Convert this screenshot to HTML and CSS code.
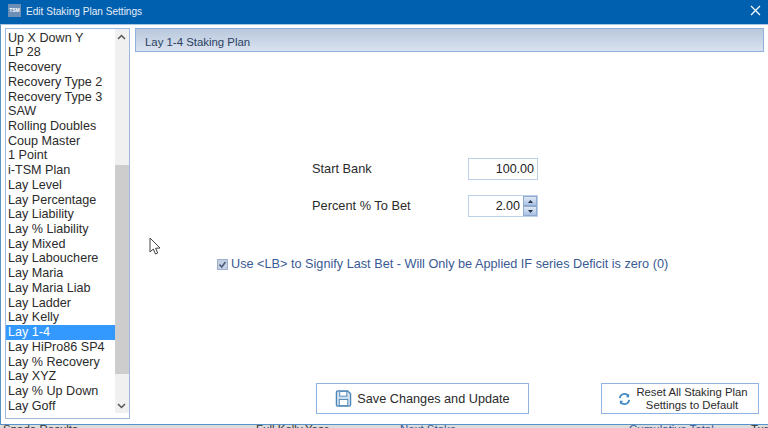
FILE: index.html
```html
<!DOCTYPE html>
<html lang="en">
<head>
    <meta charset="UTF-8">
    <title>Edit Staking Plan Settings</title>
    <link rel="stylesheet" href="styles.css">
</head>
<body>
    <div class="window">
        <!-- Title bar -->
        <div class="titlebar">
            <span class="app-icon">TSM</span>
            <span class="title">Edit Staking Plan Settings</span>
            <svg class="close" width="11" height="11" viewBox="0 0 11 11">
                <path d="M1 1 L10 10 M10 1 L1 10" stroke="#fff" stroke-width="1.2" fill="none"/>
            </svg>
        </div>

        <div class="content">
            <!-- Plan list -->
            <div class="plan-list">
                <ul class="plans">
                    <li>Up X Down Y</li>
                    <li>LP 28</li>
                    <li>Recovery</li>
                    <li>Recovery Type 2</li>
                    <li>Recovery Type 3</li>
                    <li>SAW</li>
                    <li>Rolling Doubles</li>
                    <li>Coup Master</li>
                    <li>1 Point</li>
                    <li>i-TSM Plan</li>
                    <li>Lay Level</li>
                    <li>Lay Percentage</li>
                    <li>Lay Liability</li>
                    <li>Lay % Liability</li>
                    <li>Lay Mixed</li>
                    <li>Lay Labouchere</li>
                    <li>Lay Maria</li>
                    <li>Lay Maria Liab</li>
                    <li>Lay Ladder</li>
                    <li>Lay Kelly</li>
                    <li class="selected">Lay 1-4</li>
                    <li>Lay HiPro86 SP4</li>
                    <li>Lay % Recovery</li>
                    <li>Lay XYZ</li>
                    <li>Lay % Up Down</li>
                    <li>Lay Goff</li>
                </ul>
                <div class="scrollbar">
                    <svg class="arrow" width="9" height="6" viewBox="0 0 9 6">
                        <path d="M1 5 L4.5 1.5 L8 5" stroke="#555" stroke-width="1.5" fill="none"/>
                    </svg>
                    <div class="track"><div class="thumb"></div></div>
                    <svg class="arrow" width="9" height="6" viewBox="0 0 9 6">
                        <path d="M1 1 L4.5 4.5 L8 1" stroke="#555" stroke-width="1.5" fill="none"/>
                    </svg>
                </div>
            </div>

            <!-- Settings panel -->
            <div class="panel">
                <div class="panel-header">Lay 1-4 Staking Plan</div>

                <div class="fields">
                    <div class="field">
                        <label>Start Bank</label>
                        <div class="input">100.00</div>
                    </div>
                    <div class="field">
                        <label>Percent % To Bet</label>
                        <div class="input spin">
                            <span class="spin-value">2.00</span>
                            <span class="spin-btns">
                                <span class="spin-btn"><svg width="5" height="3" viewBox="0 0 5 3"><path d="M2.5 0 L5 3 L0 3 Z" fill="#234"/></svg></span>
                                <span class="spin-btn"><svg width="5" height="3" viewBox="0 0 5 3"><path d="M0 0 L5 0 L2.5 3 Z" fill="#234"/></svg></span>
                            </span>
                        </div>
                    </div>
                </div>

                <div class="check-row">
                    <svg class="check" width="11" height="11" viewBox="0 0 11 11">
                        <rect x="0.5" y="0.5" width="10" height="10" fill="#c3cfe2" stroke="#9fb0cc"/>
                        <path d="M2.5 5.5 L4.7 8 L8.5 3" stroke="#4a5a78" stroke-width="1.5" fill="none"/>
                    </svg>
                    <span>Use &lt;LB&gt; to Signify Last Bet - Will Only be Applied IF series Deficit is zero (0)</span>
                </div>

                <div class="actions">
                    <button class="btn btn-save">
                        <svg width="17" height="17" viewBox="0 0 18 18">
                            <path d="M1.5 2.5 Q1.5 1 3 1 L13.5 1 L16.5 4 L16.5 15.5 Q16.5 17 15 17 L3 17 Q1.5 17 1.5 15.5 Z" fill="#cfe0f0" stroke="#4f86b8" stroke-width="1.4"/>
                            <rect x="5" y="1.5" width="7.5" height="5" fill="#fff" stroke="#4f86b8"/>
                            <rect x="4.5" y="10" width="9" height="6.5" fill="#fff" stroke="#4f86b8"/>
                        </svg>
                        <span>Save Changes and Update</span>
                    </button>
                    <button class="btn btn-reset">
                        <svg width="13" height="14" viewBox="0 0 14 14" fill="none">
                            <path d="M2 6 A5 5 0 0 1 11 3.5" stroke="#3f86c4" stroke-width="1.8"/>
                            <path d="M12 1 L12 5 L8.5 5 Z" fill="#3f86c4"/>
                            <path d="M12 8 A5 5 0 0 1 3 10.5" stroke="#3f86c4" stroke-width="1.8"/>
                            <path d="M2 13 L2 9 L5.5 9 Z" fill="#3f86c4"/>
                        </svg>
                        <span>Reset All Staking Plan<br>Settings to Default</span>
                    </button>
                </div>

                <svg class="cursor" width="13" height="19" viewBox="0 0 13 19">
                    <path d="M1 1 L1 15 L4.3 12 L6.5 17 L8.7 16 L6.6 11.3 L11 11 Z" fill="#fff" stroke="#444" stroke-width="1"/>
                </svg>
            </div>
        </div>

        <!-- Bit of the window behind the dialog -->
        <div class="behind">
            <span class="b1">Spade Results</span>
            <span class="b2">Full Kelly</span>
            <span class="b3">Year</span>
            <span class="b4">Next Stake</span>
            <span class="b5">Cumulative Total</span>
            <span>Tur</span>
        </div>
    </div>
</body>
</html>
```

FILE: styles.css
```css
/* Global Styles */
html, body {
    margin: 0;
    padding: 0;
    height: 100%;
    overflow: hidden;
}

body {
    font-family: "Liberation Sans", Arial, sans-serif;
    font-size: 12px;
    color: #222;
    background: #fff;
}

.window {
    width: 768px;
    height: 428px;
    display: flex;
    flex-direction: column;
    background: #fff;
}

/* Title bar */
.titlebar {
    height: 24px;
    box-sizing: border-box;
    flex: none;
    background: #0060b0;
    color: #e4edf6;
    display: flex;
    align-items: center;
    padding: 0 7px 3px 8px;
    font-size: 10.1px;
}

.app-icon {
    width: 13px;
    height: 13px;
    margin-right: 5px;
    background: #6d8fb5;
    color: #fff;
    font-size: 5px;
    font-weight: bold;
    line-height: 13px;
    text-align: center;
}

.title {
    flex: 1;
    margin-top: 2px;
}

/* Content */
.content {
    flex: 1;
    display: flex;
    gap: 5px;
    padding: 3px 4px 0 4px;
    border-left: 1px solid #5a93c8;
    border-top: 1px solid #a9c6e4;
    min-height: 0;
}

.plan-list {
    width: 125px;
    height: 391px;
    flex: none;
    display: flex;
    border: 1px solid #9db9e0;
    box-sizing: border-box;
}

.plans {
    flex: 1;
    list-style: none;
    margin: 0;
    padding: 1.7px 0 0;
    font-size: 12.6px;
    color: #2b2b2b;
}

.plans li {
    height: 14.73px;
    line-height: 14.73px;
    padding-left: 2px;
    white-space: nowrap;
}

.plans li.selected {
    background: #3399ff;
    color: #fff;
}

.scrollbar {
    width: 14px;
    margin-bottom: 5px;
    display: flex;
    flex-direction: column;
    background: #f0f0f0;
}

.arrow {
    flex: none;
    margin: 5px 2px 4px;
}

.track {
    flex: 1;
    padding-top: 121px;
    padding-bottom: 24px;
    box-sizing: border-box;
    display: flex;
}

.thumb {
    flex: 1;
    background: #cdcdcd;
}

/* Settings panel */
.panel {
    flex: 1;
    position: relative;
    display: flex;
    flex-direction: column;
    min-width: 0;
}

.panel-header {
    height: 24px;
    box-sizing: border-box;
    border: 1px solid #8fb0de;
    background: linear-gradient(#b9c8dd, #d9e2ef);
    color: #2a3f63;
    font-size: 11.4px;
    line-height: 20px;
    padding: 3px 0 0 9px;
}

.fields {
    margin: 106px 0 0 177px;
    display: flex;
    flex-direction: column;
    gap: 15px;
}

.field {
    display: flex;
    align-items: center;
    height: 22px;
}

.field label {
    width: 156px;
    margin-bottom: 2px;
    font-size: 12.8px;
    color: #2b2b2b;
}

.input {
    width: 70px;
    height: 22px;
    box-sizing: border-box;
    border: 1px solid #bcd0ea;
    text-align: right;
    font-size: 12.5px;
    line-height: 20px;
    padding-right: 3px;
}

.spin {
    display: flex;
    justify-content: flex-end;
    padding-right: 0;
}

.spin-value {
    margin-right: 3px;
}

.spin-btns {
    width: 14px;
    display: flex;
    flex-direction: column;
}

.spin-btn {
    flex: 1;
    display: flex;
    align-items: center;
    justify-content: center;
    background: linear-gradient(#dfe8f5, #a9c1e2);
    border: 1px solid #8fa9cf;
}

.check-row {
    margin: 39px 0 0 82px;
    display: flex;
    align-items: center;
    gap: 3px;
    color: #3a5a94;
    font-size: 12.7px;
    height: 16px;
}

.actions {
    margin-top: 111px;
    margin-left: 181px;
    display: flex;
    gap: 72px;
}

.btn {
    height: 31px;
    box-sizing: border-box;
    background: #fff;
    border: 1px solid #8fb4e2;
    color: #2b2b2b;
    font-family: inherit;
    padding: 0;
    display: flex;
    align-items: center;
    justify-content: center;
    gap: 5px;
}

.btn-save {
    width: 213px;
    font-size: 12.7px;
}

.btn-reset {
    width: 158px;
    font-size: 11.3px;
    line-height: 12.5px;
    padding-left: 6px;
}

.cursor {
    position: absolute;
    left: 14px;
    top: 209px;
}

/* Window behind */
.behind {
    height: 4px;
    flex: none;
    display: flex;
    overflow: hidden;
    background: #dcdcdc;
    border-top: 1px solid #5a93c8;
    box-sizing: border-box;
    padding-left: 3px;
    font-size: 11.5px;
    line-height: 12px;
    color: #333;
    white-space: nowrap;
}

.behind span {
    flex: none;
    height: 12px;
    margin-top: -2px;
}

.b1 { width: 253px; }
.b2 { width: 49px; }
.b3 { width: 95px; }
.b4 { width: 229px; color: #3a5a94; }
.b5 { width: 122px; color: #3a5a94; }
```
